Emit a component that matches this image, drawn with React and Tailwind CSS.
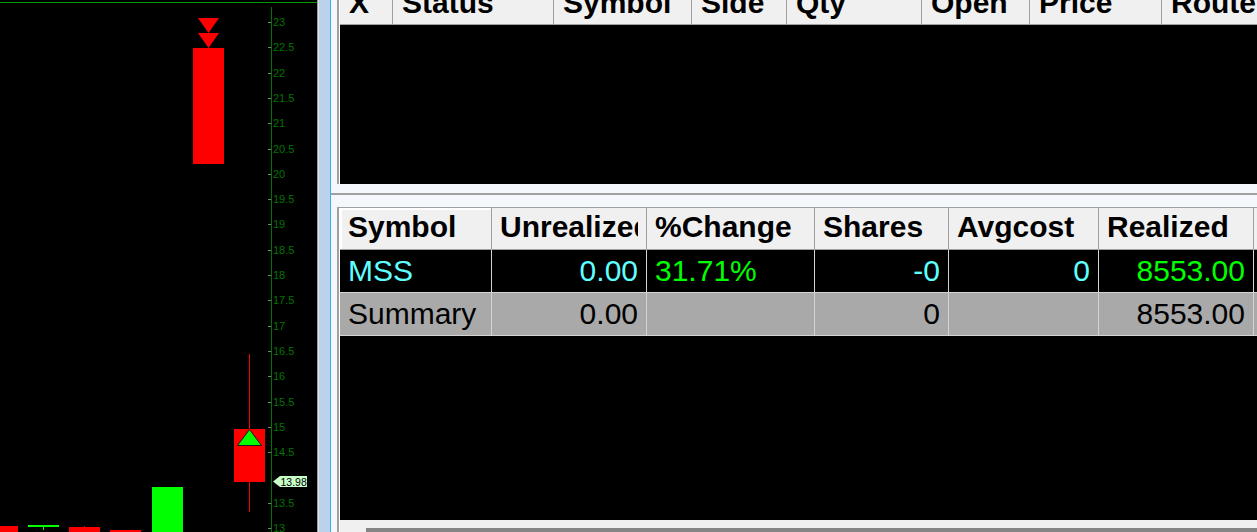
import React from "react";

const labels = [23, 22.5, 22, 21.5, 21, 20.5, 20, 19.5, 19, 18.5, 18, 17.5, 17, 16.5, 16, 15.5, 15, 14.5, 13.5, 13];
const yOf = (p) => 22 + (23 - p) * 50.6;

function Chart() {
  return (
    <svg width="317" height="532" viewBox="0 0 317 532" className="block shrink-0">
      <rect x="0" y="0" width="317" height="532" fill="#000" />
      <rect x="0" y="2" width="317" height="1" fill="#009a00" />
      <line x1="271.5" y1="7" x2="271.5" y2="532" stroke="#007400" strokeWidth="1" />
      {labels.map((p) => {
        const y = Math.round(yOf(p));
        return (
          <g key={p}>
            <line x1="268" y1={y + 0.5} x2="271" y2={y + 0.5} stroke="#808080" strokeWidth="1" />
            <text x="273" y={y + 4} fontSize="11" fill="#007400" fontFamily="'Liberation Sans', Arial, sans-serif">
              {p}
            </text>
          </g>
        );
      })}
      {/* big red candle with sell arrows */}
      <polygon points="198,18 219,18 208.5,33" fill="#ff0000" />
      <polygon points="198,33 219,33 208.5,48" fill="#ff0000" />
      <rect x="193" y="48" width="31" height="116" fill="#ff0000" />
      {/* red candle with wick and buy arrow */}
      <line x1="249.5" y1="354" x2="249.5" y2="512" stroke="#ff0000" strokeWidth="1" />
      <rect x="234" y="429" width="31" height="53" fill="#ff0000" />
      <polygon points="237.5,445.5 261.5,445.5 249.5,429.5" fill="#00ff00" stroke="#1a1a1a" strokeWidth="1" />
      {/* green candle */}
      <rect x="152" y="487" width="31" height="45" fill="#00ff00" />
      {/* small candles */}
      <rect x="0" y="526" width="18" height="6" fill="#ff0000" />
      <rect x="28" y="525" width="31" height="2" fill="#00ff00" />
      <rect x="43" y="527" width="1" height="3" fill="#00ff00" />
      <rect x="84" y="526" width="1" height="1" fill="#ff0000" />
      <rect x="69" y="527" width="31" height="5" fill="#ff0000" />
      <rect x="110" y="530" width="31" height="2" fill="#ff0000" />
      {/* last price tag */}
      <polygon points="273,481.5 280,476 280,487" fill="#c8ffc8" />
      <rect x="280" y="476" width="27" height="11" fill="#c8ffc8" />
      <text x="280.5" y="485.5" fontSize="10.5" fill="#000" fontFamily="'Liberation Sans', Arial, sans-serif">
        13.98
      </text>
    </svg>
  );
}

const topCols = [
  { t: "X", w: "w-[53px]" },
  { t: "Status", w: "w-[161px]" },
  { t: "Symbol", w: "w-[138px]" },
  { t: "Side", w: "w-[95px]" },
  { t: "Qty", w: "w-[135px]" },
  { t: "Open", w: "w-[108px]" },
  { t: "Price", w: "w-[132px]" },
];

function TopPanel() {
  return (
    <div className="ml-[6px] h-[184px] shrink-0 border-l-2 border-[#a0a0a0] bg-white pl-px">
      <div className="flex h-full flex-col overflow-hidden bg-black">
        <div className="h-[25px] shrink-0 overflow-hidden">
          <div className="-mt-[16px] flex h-[41px] border-b border-[#a0a0a0] bg-[#f0f0f0]">
            {topCols.map((c) => (
              <div
                key={c.t}
                className={`${c.w} shrink-0 overflow-hidden whitespace-nowrap border-r border-[#a0a0a0] pl-[9px] text-[30px] font-bold leading-[37px] text-black`}
              >
                {c.t}
              </div>
            ))}
            <div className="min-w-0 flex-1 overflow-hidden whitespace-nowrap pl-[9px] text-[30px] font-bold leading-[37px] text-black">
              Route
            </div>
          </div>
        </div>
        <div className="flex-1 bg-black" />
      </div>
    </div>
  );
}

const widths = ["w-[152px]", "w-[155px]", "w-[168px]", "w-[134px]", "w-[150px]", "w-[155px]"];

function HeadCell({ w, children, first }) {
  return (
    <div
      className={`${w} shrink-0 border-r border-[#a0a0a0] pl-[8px] pr-[8px] ${
        first ? "shadow-[inset_2px_2px_0_#ffffff]" : ""
      }`}
    >
      <div className="overflow-hidden whitespace-nowrap text-[30px] font-bold leading-[37px] text-black">{children}</div>
    </div>
  );
}

function Cell({ w, children, right, color }) {
  return (
    <div className={`${w} shrink-0 border-r border-[#d4d4d4] pl-[8px] pr-[8px]`}>
      <div
        className={`overflow-hidden whitespace-nowrap text-[30px] leading-[42px] ${right ? "text-right" : "text-left"} ${color}`}
      >
        {children}
      </div>
    </div>
  );
}

function BottomPanel() {
  return (
    <div className="ml-[6px] flex min-h-0 flex-1 flex-col border-l-2 border-t border-[#a0a0a0] bg-white pl-px">
      <div className="flex min-h-0 flex-1 flex-col overflow-hidden bg-black">
        <div className="flex h-[42px] shrink-0 border-b border-[#a0a0a0] bg-[#f0f0f0]">
          <HeadCell w={widths[0]} first>Symbol</HeadCell>
          <HeadCell w={widths[1]}>Unrealized</HeadCell>
          <HeadCell w={widths[2]}>%Change</HeadCell>
          <HeadCell w={widths[3]}>Shares</HeadCell>
          <HeadCell w={widths[4]}>Avgcost</HeadCell>
          <HeadCell w={widths[5]}>Realized</HeadCell>
          <div className="flex-1" />
        </div>
        <div className="flex h-[43px] shrink-0 border-b border-[#d4d4d4] bg-black">
          <Cell w={widths[0]} color="text-[#5fffff]">MSS</Cell>
          <Cell w={widths[1]} right color="text-[#5fffff]">0.00</Cell>
          <Cell w={widths[2]} color="text-[#00ff00]">31.71%</Cell>
          <Cell w={widths[3]} right color="text-[#5fffff]">-0</Cell>
          <Cell w={widths[4]} right color="text-[#5fffff]">0</Cell>
          <Cell w={widths[5]} right color="text-[#00ff00]">8553.00</Cell>
          <div className="flex-1" />
        </div>
        <div className="flex h-[43px] shrink-0 border-b border-[#d4d4d4] bg-[#a9a9a9]">
          <Cell w={widths[0]} color="text-black">Summary</Cell>
          <Cell w={widths[1]} right color="text-black">0.00</Cell>
          <Cell w={widths[2]} color="text-black"></Cell>
          <Cell w={widths[3]} right color="text-black">0</Cell>
          <Cell w={widths[4]} color="text-black"></Cell>
          <Cell w={widths[5]} right color="text-black">8553.00</Cell>
          <div className="flex-1" />
        </div>
        <div className="flex-1 bg-black" />
        <div className="h-[12px] shrink-0 bg-[#f0f0f0] pl-[26px] pt-[8px]">
          <div className="h-full bg-[#858585]" />
        </div>
      </div>
    </div>
  );
}

export default function App() {
  return (
    <div className="flex h-[532px] w-[1257px] overflow-hidden bg-black font-['Liberation_Sans',Arial,sans-serif]">
      <Chart />
      <div className="w-px shrink-0 bg-[#9a9a9a]" />
      <div className="w-px shrink-0 bg-[#e4e4e4]" />
      <div className="w-[11px] shrink-0 bg-[#bad2eb]" />
      <div className="w-px shrink-0 bg-[#2fb4ee]" />
      <div className="flex min-w-0 flex-1 flex-col bg-[#f4f7fc]">
        <TopPanel />
        <div className="h-[9px] shrink-0" />
        <div className="h-[2px] shrink-0 bg-[#a0a0a0]" />
        <div className="h-[12px] shrink-0" />
        <BottomPanel />
      </div>
    </div>
  );
}
